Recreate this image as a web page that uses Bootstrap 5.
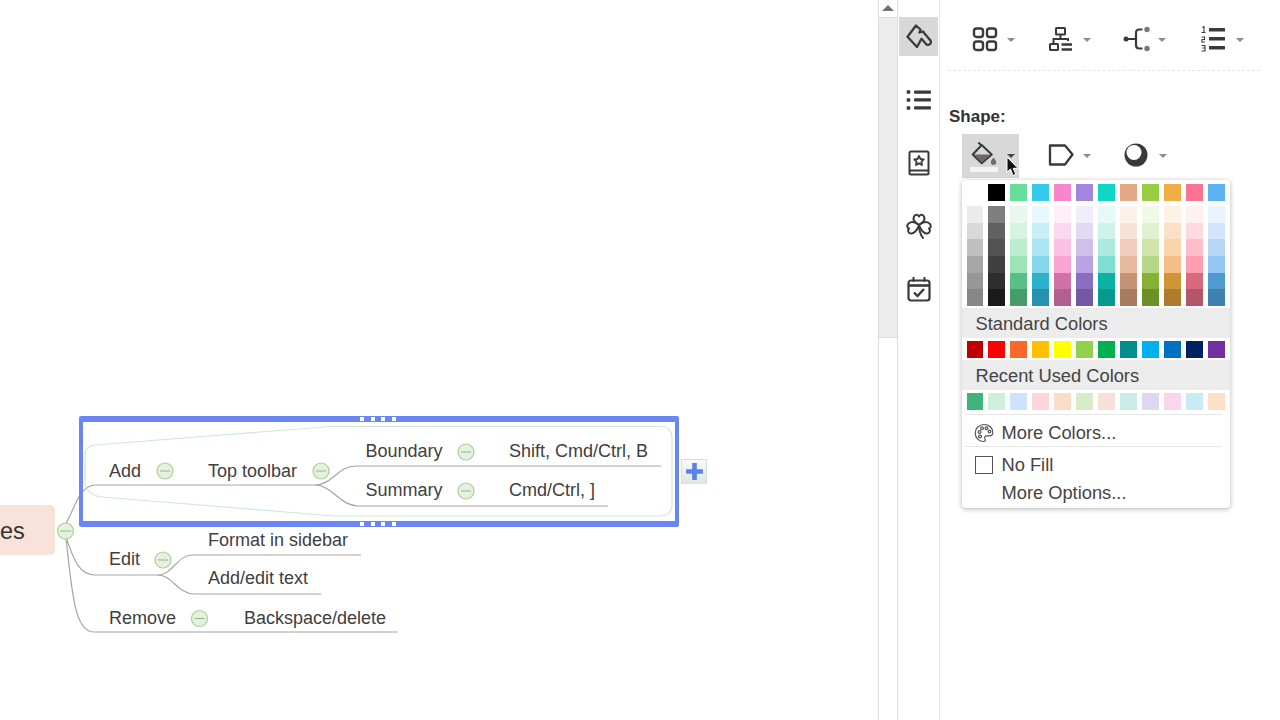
<!DOCTYPE html>
<html lang="en">
<head>
<meta charset="utf-8">
<title>Mind map format panel</title>
<link href="https://cdn.jsdelivr.net/npm/bootstrap@5.3.0/dist/css/bootstrap.min.css" rel="stylesheet">
<script src="https://cdn.jsdelivr.net/npm/bootstrap@5.3.0/dist/js/bootstrap.bundle.min.js"></script>
<style>
html,body{height:720px;overflow:hidden;background:#fff}
body{font-family:"Liberation Sans",Arial,sans-serif;color:#3c3c3c}
.mm-canvas{width:878px;height:720px;position:relative;overflow:hidden;flex:none}
.mm-lines{position:absolute;left:0;top:0}
.mm-label{position:absolute;font-size:18px;line-height:22px;white-space:nowrap;transform:translateY(-50%);color:#404040}
.mm-root{position:absolute;left:-10px;top:505px;width:65px;height:50px;background:#f8e2da;border-radius:5px;font-size:23.5px;line-height:52px;padding-left:10px;color:#333}
.mm-select{position:absolute;left:79px;top:416px;width:600px;height:111px;border:solid #6a86f2;border-width:6px 4px;border-radius:2px}
.mm-dots{position:absolute;left:277px;display:flex;gap:6.5px}
.mm-dots i{width:4px;height:4px;background:#fff;display:block}
.mm-dots.dots-t{top:-5px}
.mm-dots.dots-b{bottom:-5px}
.mm-plus{position:absolute;left:681px;top:459px;width:26px;height:25px;border:1px solid #d8e0d8;background:linear-gradient(#f9fbf9,#dfe7df);display:flex;align-items:center;justify-content:center}
.sb-col{width:20px;height:720px;flex:none;border-left:1px solid #dedede;border-right:1px solid #dedede;background:#fff}
.sb-btn{height:18px;background:#fff;border-bottom:1px solid #ddd;display:flex;align-items:center;justify-content:center}
.sb-btn i{border:solid transparent;border-width:0 6px 6px;border-bottom-color:#707070;display:block;margin-top:-1px}
.sb-track{height:320px;background:#ececec;border-bottom:1px solid #ddd}
.rail{width:42px;height:720px;flex:none;border-right:1px solid #e6e6e6;padding:17px 1px 0}
.rail-item{width:39px;height:39px;margin-bottom:24.25px;display:flex;align-items:center;justify-content:center}
.rail-on{background:#d8d8d8}
.fmt-panel{width:340px;flex:none;padding-left:8px;position:relative}
.tool-row{width:312px;height:71px;border-bottom:1px dashed #e6e6e6;padding:19px 0 0 24px}
.tool-cell{height:40px;display:flex;align-items:center;gap:9px}
.cell-a{width:77px}
.cell-b{width:75px;gap:10px}
.cell-c{width:77px;gap:7px}
.cell-d{width:60px;gap:10px}
.caret-g{width:0;height:0;border:solid transparent;border-width:4px 4px 0;border-top-color:#8c8c8c;display:block;margin-top:1px}
.shape-title{font-size:17px;font-weight:700;line-height:20px;margin:36px 0 7px 1px;color:#333}
.shape-row{padding-left:14px;height:44px}
.shape-on{width:57px;height:44px;background:#d8d8d8;display:flex;align-items:center;padding:0 0 2px 8px;gap:9px;position:relative}
.fill-bar{position:absolute;left:8px;top:33px;width:28px;height:5px;background:#f2f6f2}
.shape-cell{width:76px;display:flex;align-items:center;gap:9px;height:44px;padding-bottom:2px}
.shape-cell.first{margin-left:29px}
.caret-dk{border-top-color:#444}
.color-menu{position:absolute;left:21.5px;top:180px;width:268.5px;height:328px;background:#fff;border-radius:4px;box-shadow:0 1px 5px rgba(0,0,0,.3);padding-top:4px;font-size:18.3px;color:#444}
.swatch-row{display:flex;gap:5.33px;padding-left:5px}
.swatch-row i{display:block;width:16.67px;height:17px}
.shade-cols{display:flex;gap:5.33px;padding:5px 0 2px 5px}
.shade-cols div{width:16.67px}
.shade-cols i{display:block;height:16.67px}
.pal-head{height:30px;background:#ececec;line-height:32px;padding-left:14px;font-size:18.3px;margin:0 0 3px}
.pal-head.second{margin-top:2px}
.menu-sep{height:1px;background:#e6e6e6;margin:0 8px 0 3px}
.sep-first{margin-top:4px}
.menu-line{height:28px;line-height:26px;padding-left:40px;font-size:18.3px;position:relative;white-space:nowrap}
.line-colors{height:31px;line-height:36px}
.line-nofill{height:33px;line-height:36px}
.menu-ico{position:absolute;left:12px;top:8px;display:block}
.check-box{position:absolute;left:13px;top:9px;width:18px;height:18px;border:1.5px solid #555;background:#fff}
.pointer-ic{position:absolute;left:66px;top:156px;z-index:5}
</style>
</head>
<body class="d-flex">
<main class="mm-canvas">
  <svg class="mm-lines" width="878" height="720" fill="none">
    <g stroke="#a5a5a5" stroke-width="1.2">
      <path d="M65 525C74 512 78 485 96 485H315C332 485 338 466 356 466H661"/>
      <path d="M315 485C332 485 340 506 358 506H608"/>
      <path d="M65 535C72 552 76 575 95 575H158C172 575 178 555 192 555H361"/>
      <path d="M158 575C172 575 178 594 194 594H321"/>
      <path d="M66 538C72 590 74 632 94 632H398"/>
    </g>
    <path d="M330 426.5H660Q672 426.5 672 438V505Q672 516 660 516H334L102 497Q92 496 88 490Q85 487 85 480V455Q85 446 95 445Z" stroke="#cfe8dc" stroke-width="1.2"/>
    <g fill="#e6f0e0" stroke="#a9d095" stroke-width="1.2">
      <circle cx="65.5" cy="531" r="8"/><circle cx="165" cy="471" r="8"/><circle cx="321" cy="471" r="8"/><circle cx="466" cy="452" r="8"/><circle cx="466" cy="491" r="8"/><circle cx="163" cy="560" r="8"/><circle cx="199.5" cy="618.5" r="8"/>
    </g>
    <g stroke="#8fb884" stroke-width="1.2">
      <path d="M60 531h11M160 471h10M316 471h10M461 452h10M461 491h10M158 560h10M194.5 618.5h10"/>
    </g>
  </svg>
  <div class="mm-root">es</div>
  <div class="mm-select">
    <div class="mm-dots dots-t"><i></i><i></i><i></i><i></i></div>
    <div class="mm-dots dots-b"><i></i><i></i><i></i><i></i></div>
  </div>
  <div class="mm-plus"><svg width="19" height="19" viewBox="0 0 18 18"><path d="M6.8 1h4.400v5.800H17v4.400h-5.800V17H6.800v-5.800H1V6.800h5.800z" fill="#5b82e8"/></svg></div>
  <span class="mm-label" style="left:109px;top:471px">Add</span>
  <span class="mm-label" style="left:208px;top:471px">Top toolbar</span>
  <span class="mm-label" style="left:365.5px;top:451px">Boundary</span>
  <span class="mm-label" style="left:365.5px;top:490px">Summary</span>
  <span class="mm-label" style="left:509px;top:451px">Shift, Cmd/Ctrl, B</span>
  <span class="mm-label" style="left:509px;top:490px">Cmd/Ctrl, ]</span>
  <span class="mm-label" style="left:109px;top:559px">Edit</span>
  <span class="mm-label" style="left:208px;top:540px">Format in sidebar</span>
  <span class="mm-label" style="left:208px;top:578px">Add/edit text</span>
  <span class="mm-label" style="left:109px;top:618px">Remove</span>
  <span class="mm-label" style="left:244px;top:618px">Backspace/delete</span>
</main>
<div class="sb-col"><div class="sb-btn"><i></i></div><div class="sb-track"></div></div>
<nav class="rail">
  <div class="rail-item rail-on"><svg width="26" height="26" viewBox="0 0 26 26" fill="none" stroke="#3a3a3a" stroke-width="2.3" stroke-linejoin="round" stroke-linecap="round"><path d="M1.500 12.700L10 1.500L14.500 5.500L13.500 8.500L17 7.500L18.500 9.500L24.500 16.500Q25.500 18.500 24 20Q22.500 21.500 20.500 20.500L15.500 14.800L11 23Z"/></svg></div>
  <div class="rail-item"><svg width="26" height="24" viewBox="0 0 26 24" fill="#3a3a3a"><circle cx="2.500" cy="4" r="2"/><circle cx="2.500" cy="12" r="2"/><circle cx="2.500" cy="20" r="2"/><rect x="8" y="2.500" width="17" height="3.200" rx="1"/><rect x="8" y="10.300" width="17" height="3.200" rx="1"/><rect x="8" y="18.300" width="17" height="3.200" rx="1"/></svg></div>
  <div class="rail-item"><svg width="22" height="26" viewBox="0 0 22 26" fill="none" stroke="#3a3a3a" stroke-width="2"><rect x="1.500" y="1.500" width="19" height="23" rx="1.500"/><path d="M1.500 20.500H20.500"/><path d="M11 6l1.500 3 3.300.4-2.400 2.300.6 3.300-3-1.600-3 1.600.6-3.300L6.200 9.400 9.500 9z" stroke-width="1.800" stroke-linejoin="round"/></svg></div>
  <div class="rail-item"><svg width="26" height="26" viewBox="0 0 26 26" fill="none" stroke="#3a3a3a" stroke-width="2" stroke-linejoin="round"><path d="M13 12C8 9 6.500 6.500 8 3.500C9.500 1 12 1.500 13 3.500C14 1.500 16.500 1 18 3.500C19.500 6.500 18 9 13 12Z"/><path d="M13 12C9 8.500 5 8.500 2.500 10.500C.5 12.500 1 15 3 15.500C1.500 17 2 20 4.500 20.500C8 21 11.500 17 13 12Z"/><path d="M13 12C17 8.500 21 8.500 23.500 10.500C25.500 12.500 25 15 23 15.500C24.500 17 24 20 21.500 20.500C18 21 14.500 17 13 12Z"/><path d="M13 12C13 17 14 21 17 25" stroke-linecap="round"/></svg></div>
  <div class="rail-item"><svg width="24" height="25" viewBox="0 0 24 25" fill="none" stroke="#3a3a3a" stroke-width="2.2"><rect x="1.500" y="3.500" width="21" height="20" rx="2.500"/><path d="M1.500 8.500H22.500" stroke-width="2.600"/><path d="M6.500 .5V4M17.500 .5V4" stroke-width="2" stroke-linecap="round"/><path d="M7 15.500L10.500 19L17 12" stroke-width="2.400"/></svg></div>
</nav>
<aside class="fmt-panel">
  <div class="tool-row d-flex">
    <div class="tool-cell cell-a"><svg width="26" height="26" viewBox="0 0 26 26" fill="none" stroke="#3a3a3a" stroke-width="2.4"><rect x="2" y="2.500" width="9" height="8.500" rx="2.500"/><rect x="15" y="2.500" width="9" height="8.500" rx="2.500"/><rect x="2" y="15.500" width="9" height="8.500" rx="2.500"/><rect x="15" y="15.500" width="9" height="8.500" rx="2.500"/></svg><i class="caret-g"></i></div>
    <div class="tool-cell cell-b"><svg width="24" height="26" viewBox="0 0 24 26" fill="none" stroke="#3a3a3a" stroke-width="2"><rect x="7" y="2" width="9" height="6.500" rx=".5"/><path d="M11.500 8.500V13M4.500 17.500V13H19V15"/><rect x="1" y="18" width="8" height="6" rx=".5"/><path d="M12.500 18.500H23M12.500 23.500H23" stroke-width="2.400"/></svg><i class="caret-g"></i></div>
    <div class="tool-cell cell-c"><svg width="28" height="26" viewBox="0 0 28 26" fill="#3a3a3a"><circle cx="3" cy="13" r="2.500"/><circle cx="24" cy="3.500" r="2.700" fill="#777"/><circle cx="24" cy="22.500" r="2.700" fill="#777"/><path d="M3 13h9M19.500 3.500H16Q13 3.500 13 7V19Q13 22.500 16 22.500H19.500" fill="none" stroke="#3a3a3a" stroke-width="2.200"/></svg><i class="caret-g"></i></div>
    <div class="tool-cell cell-d"><svg width="26" height="26" viewBox="0 0 26 26" fill="#3a3a3a"><rect x="9" y="2" width="16" height="3.600" rx=".5"/><rect x="9" y="11" width="16" height="3.600" rx=".5"/><rect x="9" y="20" width="16" height="3.600" rx=".5"/><path d="M2.500 1.500L4 .5V6.500M1.500 6.500H5.500M1.500 11H4.500V13.500H2V16H5M1.500 19.500H5V22H2.500M5 22V25H1.500" fill="none" stroke="#3a3a3a" stroke-width="1.100"/></svg><i class="caret-g"></i></div>
  </div>
  <h6 class="shape-title">Shape:</h6>
  <div class="shape-row d-flex">
    <div class="shape-on"><svg width="28" height="26" viewBox="0 0 28 26" fill="none" stroke="#3a3a3a" stroke-width="2"><path d="M8.300 .5L11.700 3.500M11.700 3L21.700 12.500L11.700 21.300L2.700 12.500Z" stroke-linejoin="round"/><path d="M3.500 12.500H20.500L11.700 20.500Z" fill="#6f6666" stroke="none"/><path d="M23.500 15.500c1.700 2 2.700 3.300 2.700 4.700a2.700 2.700 0 0 1-5.400 0c0-1.400 1-2.700 2.700-4.700z" fill="#6f6f6f" stroke="none"/></svg><span class="fill-bar"></span><i class="caret-g caret-dk"></i></div>
    <div class="shape-cell first"><svg width="26" height="24" viewBox="0 0 26 24" fill="none" stroke="#3a3a3a" stroke-width="2.3" stroke-linejoin="round"><path d="M2 2.500H17L24.500 11.500L17 21.500H2Z"/></svg><i class="caret-g"></i></div>
    <div class="shape-cell"><svg width="26" height="24" viewBox="0 0 26 24"><circle cx="12" cy="12" r="11.500" fill="#3a3a3a"/><circle cx="10" cy="9.500" r="7.500" fill="#fff"/></svg><i class="caret-g"></i></div>
  </div>
  <div class="color-menu" role="menu">
    <div class="swatch-row"><i style="background:#fff"></i><i style="background:#000"></i><i style="background:#67dc9b"></i><i style="background:#33caeb"></i><i style="background:#f787ca"></i><i style="background:#a385dd"></i><i style="background:#0fd5c4"></i><i style="background:#e5a988"></i><i style="background:#97cd3f"></i><i style="background:#f2ad45"></i><i style="background:#fb7390"></i><i style="background:#5cb3f3"></i></div>
    <div class="shade-cols">
      <div><i style="background:#ebebeb"></i><i style="background:#d9d9d9"></i><i style="background:#bfbfbf"></i><i style="background:#a6a6a6"></i><i style="background:#979797"></i><i style="background:#878787"></i></div>
      <div><i style="background:#7f7f7f"></i><i style="background:#616161"></i><i style="background:#525252"></i><i style="background:#404040"></i><i style="background:#2e2e2e"></i><i style="background:#1a1a1a"></i></div>
      <div><i style="background:#e9f8ef"></i><i style="background:#d4f3e0"></i><i style="background:#bcecce"></i><i style="background:#9ce3b6"></i><i style="background:#5abf86"></i><i style="background:#479c6c"></i></div>
      <div><i style="background:#e6f7fd"></i><i style="background:#c9eef8"></i><i style="background:#ace4f2"></i><i style="background:#83d7ec"></i><i style="background:#2bb3cd"></i><i style="background:#2692ae"></i></div>
      <div><i style="background:#feeff8"></i><i style="background:#fcd8ee"></i><i style="background:#fcc0e2"></i><i style="background:#faa4d5"></i><i style="background:#d171aa"></i><i style="background:#b25f92"></i></div>
      <div><i style="background:#f2edfb"></i><i style="background:#e2d9f3"></i><i style="background:#cfc0ea"></i><i style="background:#b9a3e2"></i><i style="background:#8a6ebf"></i><i style="background:#7259a1"></i></div>
      <div><i style="background:#e6f9f7"></i><i style="background:#cff2ed"></i><i style="background:#ade9e1"></i><i style="background:#7fded3"></i><i style="background:#0cb3a5"></i><i style="background:#0a988c"></i></div>
      <div><i style="background:#fcf0eb"></i><i style="background:#f8e2d8"></i><i style="background:#f2cdbd"></i><i style="background:#e9b9a0"></i><i style="background:#c49275"></i><i style="background:#a87a60"></i></div>
      <div><i style="background:#f0f8e6"></i><i style="background:#e1f0cf"></i><i style="background:#cfe5a9"></i><i style="background:#b5d888"></i><i style="background:#86b134"></i><i style="background:#6a9026"></i></div>
      <div><i style="background:#fef2e5"></i><i style="background:#fce0c6"></i><i style="background:#fad5ac"></i><i style="background:#f4bf86"></i><i style="background:#cf9638"></i><i style="background:#ae7c2c"></i></div>
      <div><i style="background:#fff0f2"></i><i style="background:#ffd9e0"></i><i style="background:#ffbec9"></i><i style="background:#fd9daf"></i><i style="background:#d86a80"></i><i style="background:#b5556a"></i></div>
      <div><i style="background:#eaf4fe"></i><i style="background:#d2e5fb"></i><i style="background:#b7d5f5"></i><i style="background:#96c6f3"></i><i style="background:#4f9bd0"></i><i style="background:#4080ac"></i></div>
    </div>
    <div class="pal-head">Standard Colors</div>
    <div class="swatch-row"><i style="background:#c00000"></i><i style="background:#ff0000"></i><i style="background:#f96a2a"></i><i style="background:#ffc000"></i><i style="background:#ffff00"></i><i style="background:#92d050"></i><i style="background:#00b050"></i><i style="background:#038e8e"></i><i style="background:#00b0f0"></i><i style="background:#0070c0"></i><i style="background:#002060"></i><i style="background:#7030a0"></i></div>
    <div class="pal-head second">Recent Used Colors</div>
    <div class="swatch-row"><i style="background:#3eb47a"></i><i style="background:#cdefdc"></i><i style="background:#cfe2fc"></i><i style="background:#fed5dd"></i><i style="background:#fbdcc6"></i><i style="background:#d8ecca"></i><i style="background:#f8e0d8"></i><i style="background:#c8ece7"></i><i style="background:#dfd8f2"></i><i style="background:#fad6ec"></i><i style="background:#c9ecf4"></i><i style="background:#fde0c4"></i></div>
    <div class="menu-sep sep-first"></div>
    <div class="menu-line line-colors"><svg class="menu-ico" width="20" height="20" viewBox="0 0 20 20" fill="none" stroke="#555" stroke-width="1.2"><path d="M10 1.500C5 1.500 1.200 5.300 1.200 10C1.200 14.800 5 18.500 9.500 18.500C11.500 18.500 11.800 17 11 15.800C10 14.200 11 12.800 12.800 12.800H15.500C17.500 12.800 18.800 11.500 18.800 9.500C18.800 5 15 1.500 10 1.500Z"/><circle cx="5.500" cy="9" r="1.400"/><circle cx="8" cy="5.200" r="1.400"/><circle cx="12.500" cy="5.200" r="1.400"/><circle cx="15.500" cy="8.500" r="1.400"/><circle cx="6" cy="13.500" r="1.400"/></svg>More Colors...</div>
    <div class="menu-sep"></div>
    <div class="menu-line line-nofill"><span class="check-box"></span>No Fill</div>
    <div class="menu-line">More Options...</div>
  </div>
  <svg class="pointer-ic" width="14" height="22" viewBox="0 0 14 22"><path d="M1 1V16L4.500 13L7 19.500L9.800 18.300L7.200 12.300H12Z" fill="#111" stroke="#fff" stroke-width="1"/></svg>
</aside>
</body>
</html>
